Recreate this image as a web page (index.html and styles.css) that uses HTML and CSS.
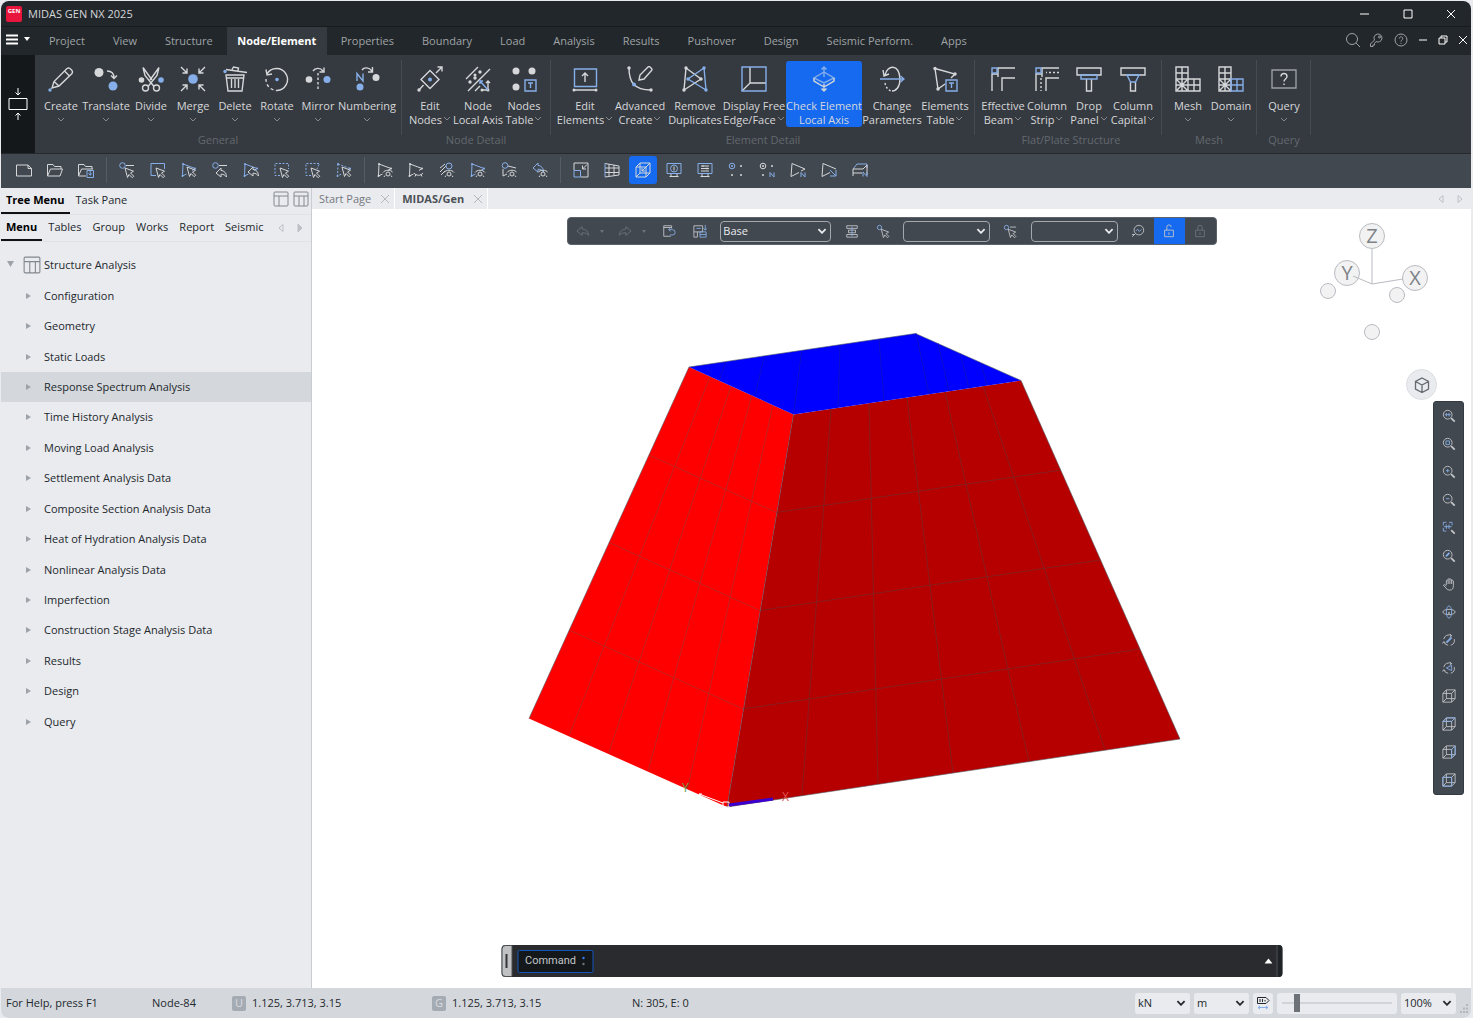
FILE: index.html
```html
<!DOCTYPE html>
<html lang="en">
<head>
    <meta charset="UTF-8">
    <meta name="viewport" content="width=device-width, initial-scale=1.0">
    <title>MIDAS GEN NX 2025</title>
    <link rel="stylesheet" href="styles.css">
</head>
<body>
    <!-- shared icon parts -->
    <svg class="defs" aria-hidden="true">
        <defs>
            <path id="cur" d="M0 0l8.500 3.200-3 1.800 3.200 3.200-1.500 1.500L4 6.500 2.500 9.500z"/>
            <path id="back" d="M0 5l5-5v2.500c3 0 5.500 2.500 5.500 6.500-1.500-2-3-2.800-5.500-2.800V9z"/>
            <g id="eye"><path d="M0 3.500C2 .5 8 .5 10 3.500"/><circle cx="5" cy="5" r="2"/><path d="M2 6.500L1 8M8 6.500L9 8"/></g>
            <path id="chev" d="M1 1l3 3 3-3"/>
            <g id="tri"><path d="M2 2l12 4.500M2 2L1.500 14l4-2M14 6.500l-3 2"/><path class="dots" d="M2 2h.01M14 6.500h.01M1.500 14h.01"/></g>
            <g id="lens"><circle cx="6.500" cy="6.500" r="5"/><path d="M10.500 10.500l4 4" class="thick"/></g>
            <g id="cube"><path d="M1 5h10v10H1zM5 1h10v10H5zM1 5l4-4M11 5l4-4M11 15l4-4M1 15l4-4"/></g>
            <g id="panel"><rect x="1" y="1" width="14" height="14" rx="1"/><path d="M1 5h14M6 5v10"/></g>
        </defs>
    </svg>

    <div class="window">
        <header class="titlebar">
            <span class="logo">GEN</span>
            <h1>MIDAS GEN NX 2025</h1>
            <div class="window-buttons">
                <button aria-label="Minimize"><svg viewBox="0 0 12 12"><path d="M1 6h9"/></svg></button>
                <button aria-label="Maximize"><svg viewBox="0 0 12 12"><path d="M2 2h8v8H2z"/></svg></button>
                <button aria-label="Close"><svg viewBox="0 0 12 12"><path d="M2 2l8 8M10 2l-8 8"/></svg></button>
            </div>
        </header>

        <nav class="menubar">
            <button class="burger" aria-label="Main menu">
                <svg viewBox="0 0 26 12"><path class="bars" d="M1 1.500h12M1 5.500h12M1 9.500h12"/><path class="caret" d="M19 3h6l-3 4z"/></svg>
            </button>
            <div class="menu-tabs">
                <button>Project</button>
                <button>View</button>
                <button>Structure</button>
                <button class="active">Node/Element</button>
                <button>Properties</button>
                <button>Boundary</button>
                <button>Load</button>
                <button>Analysis</button>
                <button>Results</button>
                <button>Pushover</button>
                <button>Design</button>
                <button>Seismic Perform.</button>
                <button>Apps</button>
            </div>
            <div class="menu-tools">
                <button aria-label="Search"><svg viewBox="0 0 16 16"><circle cx="7" cy="7" r="5.500"/><path d="M11 11l4 4"/></svg></button>
                <button aria-label="License"><svg viewBox="0 0 16 16"><path d="M7 9.500a4 4 0 1 0-1.500-1.500L1.500 12v2.500H4V13h1.500v-1.500z"/><circle cx="10.500" cy="5" r="1"/></svg></button>
                <button aria-label="Help"><svg viewBox="0 0 16 16"><circle cx="8" cy="8" r="6"/><path d="M6.300 6.500c0-2.200 3.500-2.200 3.500 0C9.800 8 8 7.800 8 9.500M8 10.800v1"/></svg></button>
                <button class="doc" aria-label="Minimize document"><svg viewBox="0 0 12 12"><path d="M2 6h8"/></svg></button>
                <button class="doc" aria-label="Restore document"><svg viewBox="0 0 12 12"><path d="M2 4h6v6H2zM4 4V2h6v6H8"/></svg></button>
                <button class="doc" aria-label="Close document"><svg viewBox="0 0 12 12"><path d="M2 2l8 8M10 2l-8 8"/></svg></button>
            </div>
        </nav>

        <section class="ribbon">
            <button class="collapse" aria-label="Collapse ribbon">
                <svg viewBox="0 0 22 34"><path d="M2 11.500h18v11H2zM11 1v7M8.500 5.500L11 8l2.500-2.500M11 33v-7M8.500 28.500L11 26l2.500 2.500"/></svg>
            </button>

            <div class="group general">
                <div class="tools">
                    <button><svg class="icon" viewBox="0 0 26 26"><path d="M4 22l2-6.500 13-13q1.500-1 3 0l2 2q1 1.500 0 3L11 20zM16.500 5l5 5M6 15.500l5 4.500"/><circle class="bf" cx="2" cy="24" r="1.700"/></svg><span>Create</span><svg class="chev" viewBox="0 0 8 5"><use href="#chev"/></svg></button>
                    <button><svg class="icon" viewBox="0 0 26 26"><circle class="f" cx="6" cy="6.500" r="4.500"/><circle class="bf" cx="20" cy="20" r="4.500"/><path d="M14 5c5 0 7 3 7 7M18 9.500l3 3 3-3"/></svg><span>Translate</span><svg class="chev" viewBox="0 0 8 5"><use href="#chev"/></svg></button>
                    <button><svg class="icon" viewBox="0 0 26 26"><path d="M5 1.500l2 8 9 11M21 1.500l-2 8-9 11M5 1.500L14 14M21 1.500L12 14"/><circle cx="7.500" cy="22" r="3"/><circle cx="18.500" cy="22" r="3"/><circle class="f" cx="3.500" cy="14" r="2.800"/><circle class="bf" cx="23" cy="14" r="2.800"/></svg><span>Divide</span><svg class="chev" viewBox="0 0 8 5"><use href="#chev"/></svg></button>
                    <button><svg class="icon" viewBox="0 0 26 26"><circle class="bf" cx="13" cy="13" r="4.800"/><path d="M1 1l6 6M7 2.500V7H2.500M25 1l-6 6M19 2.500V7h4.500M1 25l6-6M7 23.500V19H2.500M25 25l-6-6M19 23.500V19h4.500"/></svg><span>Merge</span><svg class="chev" viewBox="0 0 8 5"><use href="#chev"/></svg></button>
                    <button><svg class="icon" viewBox="0 0 26 26"><path d="M4 9h18l-2 16H6zM5 12h16M9.500 13v9M13 13v9M16.500 13v9M4 3.500l21 3M10 3.500L11.500 1l5 1-.5 2.500"/><circle class="bf" cx="3" cy="5.500" r="1.700"/></svg><span>Delete</span><svg class="chev" viewBox="0 0 8 5"><use href="#chev"/></svg></button>
                    <button><svg class="icon" viewBox="0 0 26 26"><path d="M3 8A11 11 0 1 1 13 24.500M2 3.500L3 9l5-1"/><path stroke-dasharray="3 2.500" d="M2 13a11 11 0 0 0 11 11.500"/><circle class="bf" cx="13" cy="13.500" r="1.800"/></svg><span>Rotate</span><svg class="chev" viewBox="0 0 8 5"><use href="#chev"/></svg></button>
                    <button><svg class="icon" viewBox="0 0 26 26"><circle class="f" cx="4" cy="13.500" r="3.300"/><circle class="bf" cx="22" cy="13.500" r="3.500"/><path d="M8 5c2-3 7-4 10 0M14.500 6H19V1.500"/><path stroke-dasharray="2.500 2" d="M13 7v18"/></svg><span>Mirror</span><svg class="chev" viewBox="0 0 8 5"><use href="#chev"/></svg></button>
                    <button><svg class="icon" viewBox="0 0 26 26"><path class="b" d="M3 15V7.500l6 7.500V7.500"/><circle class="bf" cx="6" cy="21" r="3.500"/><circle class="f" cx="22" cy="11.500" r="3.500"/><path d="M8 4c2-3 7-3 10 1M14 6h4.500V1"/></svg><span>Numbering</span><svg class="chev" viewBox="0 0 8 5"><use href="#chev"/></svg></button>
                </div>
                <h2>General</h2>
            </div>

            <div class="group node-detail">
                <div class="tools">
                    <button><svg class="icon" viewBox="0 0 26 26"><path d="M13 4.500l9 9-9 9-9-9zM2 24l4.500-5M19 7l6-6M20.500 1H25v4.500"/><circle class="bf" cx="13" cy="13.500" r="2"/><circle class="f" cx="2" cy="24" r="1.700"/></svg><span>Edit<br>Nodes<svg class="chev" viewBox="0 0 8 5"><use href="#chev"/></svg></span></button>
                    <button><svg class="icon" viewBox="0 0 26 26"><path d="M1 13L13 1M3 25L25 3M10 25l5-5"/><g class="f"><circle cx="10" cy="9" r="1.500"/><circle cx="15" cy="6" r="1.700"/><circle cx="5" cy="16" r="1.700"/><circle cx="10" cy="12" r="1.700"/><circle cx="23" cy="24" r="1.500"/><circle cx="17" cy="24" r="1.500"/></g><path d="M23 24v-9M21 17l2-2 2 2M23 24h-7"/><path class="b" d="M23 24l-8-9M15 18v-3h3"/></svg><span>Node<br>Local Axis</span></button>
                    <button><svg class="icon" viewBox="0 0 26 26"><circle class="f" cx="5" cy="5" r="3.500"/><circle class="f" cx="21" cy="5" r="3.500"/><circle class="f" cx="5" cy="21" r="3.500"/><path class="b" d="M14 14h11v11H14zM17 17h5M19.500 17v5"/></svg><span>Nodes<br>Table<svg class="chev" viewBox="0 0 8 5"><use href="#chev"/></svg></span></button>
                </div>
                <h2>Node Detail</h2>
            </div>

            <div class="group element-detail">
                <div class="tools">
                    <button><svg class="icon" viewBox="0 0 26 26"><path class="b" d="M2.500 3h22v17.500h-22z"/><path d="M13 16V7M10 10l3-3 3 3M2 24h22"/><circle class="f" cx="2" cy="24" r="1.500"/><circle class="f" cx="24" cy="24" r="1.500"/></svg><span>Edit<br>Elements<svg class="chev" viewBox="0 0 8 5"><use href="#chev"/></svg></span></button>
                    <button><svg class="icon" viewBox="0 0 26 26"><path d="M2 2c0 14 5 22 22 22M12 14l1-5 8-8q1-1 2 0l1.500 1.500q1 1 0 2L17 13z"/><circle class="f" cx="2" cy="2" r="1.700"/><circle class="f" cx="24" cy="24" r="1.700"/><circle class="bf" cx="7" cy="18.500" r="1.900"/></svg><span>Advanced<br>Create<svg class="chev" viewBox="0 0 8 5"><use href="#chev"/></svg></span></button>
                    <button><svg class="icon" viewBox="0 0 26 26"><path d="M4 2L2 24l17-11L4 2"/><path class="b" d="M22 2l2 22L6 13 22 2"/><g class="f"><circle cx="4" cy="2" r="1.700"/><circle cx="2" cy="24" r="1.700"/><circle cx="19" cy="13" r="1.700"/></g><g class="bf"><circle cx="22" cy="2" r="1.700"/><circle cx="24" cy="24" r="1.700"/><circle cx="6" cy="13" r="1.700"/></g></svg><span>Remove<br>Duplicates</span></button>
                    <button><svg class="icon" viewBox="0 0 26 26"><path d="M9 1v16h16M9 17l-8 8"/><path class="b" d="M1 1h24v24H1z"/></svg><span>Display Free<br>Edge/Face<svg class="chev" viewBox="0 0 8 5"><use href="#chev"/></svg></span></button>
                    <button class="active"><svg class="icon" viewBox="0 0 26 26"><path class="b" d="M13 6l10 6-10 5-10-5zM13 11V1M10.500 3.500L13 1l2.500 2.500"/><path d="M3 12v3l10 6 10-6v-3M13 18v7M10.500 22.500L13 25l2.500-2.500"/></svg><span>Check Element<br>Local Axis</span></button>
                    <button><svg class="icon" viewBox="0 0 26 26"><path d="M6 9c2-10 14-12 15 4 0 8-4 12-8 12M4 4l1 6 5-2"/><path stroke-dasharray="2 2" d="M6 17c1 5 4 8 7 8"/><path class="b" d="M1 13h24M21.500 10l3.500 3-3.500 3"/></svg><span>Change<br>Parameters</span></button>
                    <button><svg class="icon" viewBox="0 0 26 26"><path d="M3 2.500L6 23l7-5M3 2.500L23 8l-4 4"/><circle class="f" cx="3" cy="2.500" r="1.700"/><circle class="f" cx="23" cy="8" r="1.700"/><circle class="f" cx="6" cy="23" r="1.700"/><path class="b" d="M14 14h11v11H14zM17 17h5M19.500 17v5"/></svg><span>Elements<br>Table<svg class="chev" viewBox="0 0 8 5"><use href="#chev"/></svg></span></button>
                </div>
                <h2>Element Detail</h2>
            </div>

            <div class="group plate">
                <div class="tools">
                    <button><svg class="icon" viewBox="0 0 26 26"><path d="M25 2H8v9M25 12H12v13M2 25V8h6"/><path class="b" d="M2 2h5v5H2z"/></svg><span>Effective<br>Beam<svg class="chev" viewBox="0 0 8 5"><use href="#chev"/></svg></span></button>
                    <button><svg class="icon" viewBox="0 0 26 26"><path d="M25 2H8v9M25 12H12v13M2 25V8h6"/><path stroke-dasharray="2 2" d="M25 6.500H12M7 12v13"/><path class="b" d="M2 2h5v5H2z"/></svg><span>Column<br>Strip<svg class="chev" viewBox="0 0 8 5"><use href="#chev"/></svg></span></button>
                    <button><svg class="icon" viewBox="0 0 26 26"><path d="M1 2h24v7H1zM10.500 13v12h5V13"/><path class="b" d="M5 9h16v4H5z"/></svg><span>Drop<br>Panel<svg class="chev" viewBox="0 0 8 5"><use href="#chev"/></svg></span></button>
                    <button><svg class="icon" viewBox="0 0 26 26"><path d="M1 2h24v7H1zM10.500 16v9h5v-9"/><path class="b" d="M7 9h12l-3.500 7h-5z"/></svg><span>Column<br>Capital<svg class="chev" viewBox="0 0 8 5"><use href="#chev"/></svg></span></button>
                </div>
                <h2>Flat/Plate Structure</h2>
            </div>

            <div class="group mesh">
                <div class="tools">
                    <button><svg class="icon" viewBox="0 0 26 26"><path d="M1 1h12v24H1zM7 1v24M1 7h12M1 13h24v12H13M19 13v12M1 19h24M2 14l10 10M12 14L2 24"/></svg><span>Mesh</span><svg class="chev" viewBox="0 0 8 5"><use href="#chev"/></svg></button>
                    <button><svg class="icon" viewBox="0 0 26 26"><path d="M1 1h12v24H1zM7 1v24M1 7h12M1 13h12M1 19h12M2 14l10 10M12 14L2 24"/><path class="b" d="M13 13h12v12H13zM19 13v12M13 19h12"/></svg><span>Domain</span><svg class="chev" viewBox="0 0 8 5"><use href="#chev"/></svg></button>
                </div>
                <h2>Mesh</h2>
            </div>

            <div class="group query">
                <div class="tools">
                    <button><svg class="icon" viewBox="0 0 26 26"><path class="dim" d="M1 4h24v18H1z"/><path d="M10 10.500c0-4 6-4 6 0 0 2.500-3 2.500-3 5M13 17.500v1.500"/></svg><span>Query</span><svg class="chev" viewBox="0 0 8 5"><use href="#chev"/></svg></button>
                </div>
                <h2>Query</h2>
            </div>
        </section>

        <div class="toolbar">
            <button aria-label="New"><svg viewBox="0 0 16 16"><path d="M.5 3H12l3.500 3.500V14H.5zM12 3v3.500h3.500"/></svg></button>
            <button aria-label="Open"><svg viewBox="0 0 16 16"><path d="M.5 14V2.500H6L7.500 4.500H14V7M.5 14L3.500 7h12L13 14z"/></svg></button>
            <button aria-label="Import"><svg viewBox="0 0 16 16"><path d="M8 14H.5V2.500H6L7.500 4.500H14V7M.5 14L3.500 7H15"/><path class="b" d="M9 8.500h6.500v7H9zM12.200 9v4M10.500 11.500l1.700 1.700 1.700-1.700"/></svg></button>
            <i></i>
            <button aria-label="Select single"><svg viewBox="0 0 16 16"><circle class="b" cx="3.500" cy="3.500" r="2.800"/><path d="M7 3.500h8"/><use href="#cur" x="6" y="6"/></svg></button>
            <button aria-label="Select window"><svg viewBox="0 0 16 16"><path class="b" d="M6 13.500H1V1.500h13.500V7"/><use href="#cur" x="6" y="6"/></svg></button>
            <button aria-label="Select polygon"><svg viewBox="0 0 16 16"><g class="b"><use href="#tri"/></g><use href="#cur" x="6" y="5"/></svg></button>
            <button aria-label="Unselect single"><svg viewBox="0 0 16 16"><circle class="b" cx="3.500" cy="3.500" r="2.800"/><path d="M7 3.500h8"/><use href="#back" x="4" y="6"/></svg></button>
            <button aria-label="Unselect polygon"><svg viewBox="0 0 16 16"><g class="b"><use href="#tri"/></g><use href="#back" x="5" y="5"/></svg></button>
            <button aria-label="Select intersect"><svg viewBox="0 0 16 16"><path class="b" stroke-dasharray="2 1.500" d="M6 13.500H1V1.500h13.500V7"/><use href="#cur" x="6" y="6"/></svg></button>
            <button aria-label="Select line"><svg viewBox="0 0 16 16"><path class="b" stroke-dasharray="2 1.500" d="M6 13.500H1V1.500h13.500L12 7"/><use href="#cur" x="6" y="6"/></svg></button>
            <button aria-label="Select plane"><svg viewBox="0 0 16 16"><g class="b" stroke-dasharray="2 1.500"><use href="#tri"/></g><use href="#cur" x="6" y="5"/></svg></button>
            <i></i>
            <button aria-label="Activate"><svg viewBox="0 0 16 16"><use href="#tri"/><use href="#eye" x="6" y="7"/></svg></button>
            <button aria-label="Inactivate"><svg viewBox="0 0 16 16"><use href="#tri"/><path d="M6 11c2 3 7 3 9 0M8 12.500l-1 2M13 12.500l1 2"/></svg></button>
            <button aria-label="Activate identity"><svg viewBox="0 0 16 16"><path d="M1 6l5-4M1 10l6-6M2 13l4-4"/><circle class="b" cx="10" cy="4" r="3"/><use href="#eye" x="5" y="7"/></svg></button>
            <button aria-label="Activate all"><svg viewBox="0 0 16 16"><g class="b"><use href="#tri"/></g><use href="#eye" x="5" y="7"/></svg></button>
            <button aria-label="Activate previous"><svg viewBox="0 0 16 16"><circle class="b" cx="4" cy="3.500" r="2.800"/><path d="M7 4l8 2M2 7v7l4-2"/><use href="#eye" x="6" y="7"/></svg></button>
            <button aria-label="Activate back"><svg viewBox="0 0 16 16"><g class="b"><use href="#back" x="1" y="1"/></g><use href="#eye" x="6" y="7"/></svg></button>
            <i></i>
            <button aria-label="Shrink"><svg viewBox="0 0 16 16"><path d="M1 8V1h14v14H8M14 2.500L9.500 7M9.500 3.500V7H13"/><path class="b" d="M1 8.500h6.500V15H1z"/></svg></button>
            <button aria-label="Perspective"><svg viewBox="0 0 16 16"><path d="M1 1.500L15 4v9L1 15M5 2v12M10 3v10.500M1 6h14M1 10.500h14"/><path class="b" d="M1 1v14"/></svg></button>
            <button class="active" aria-label="Hidden view"><svg viewBox="0 0 16 16"><use href="#cube"/><path d="M7 9l4-4M7 6v3h3"/></svg></button>
            <button aria-label="Initial view"><svg viewBox="0 0 16 16"><path class="b" d="M1 1.500h14v10H1z"/><circle class="b" cx="8" cy="6.500" r="3.500"/><path d="M8 4.500v4M5 12v2.500M11 12v2.500M3.500 14.500h9"/></svg></button>
            <button aria-label="Display"><svg viewBox="0 0 16 16"><path class="b" d="M1 1.500h14v10H1z"/><path d="M4 4h8M4 6.500h8M4 9h8M6 3v2M10 5.500v2M5 12v2.500M11 12v2.500M3.500 14.500h9"/></svg></button>
            <button aria-label="Nodes"><svg viewBox="0 0 16 16"><circle class="b" cx="4" cy="4" r="2.800"/><path class="b dots" d="M4 4h.01"/><path class="dots" d="M13 4h.01M4 13h.01M13 13h.01"/></svg></button>
            <button aria-label="Node numbers"><svg viewBox="0 0 16 16"><circle cx="4" cy="4" r="2.800"/><path class="dots" d="M4 4h.01M13 4h.01M4 13h.01"/><path class="b" d="M11 15v-4.500l4 4.500v-4.500"/></svg></button>
            <button aria-label="Element numbers"><svg viewBox="0 0 16 16"><path d="M2 1.500L15 7l-4 2M2 1.500L1 14.500l8-4"/><path class="b" d="M11 15v-4.500l4 4.500v-4.500"/></svg></button>
            <button aria-label="Element axes"><svg viewBox="0 0 16 16"><path d="M2 1.500L15 7M2 1.500L1 14.500l8-4"/><path class="b" d="M9 8l6 6M15 8v6H9"/></svg></button>
            <button aria-label="Property names"><svg viewBox="0 0 16 16"><path class="b" d="M1 7l4-5h10v4"/><path d="M1 14V7h10l4-4v10M1 11h9"/><path class="b" d="M11 14.500V10l4 4.500V10"/></svg></button>
        </div>

        <main class="main">
            <aside class="sidebar">
                <div class="pane-tabs">
                    <button class="active">Tree Menu</button>
                    <button>Task Pane</button>
                    <span class="pane-tools">
                        <button aria-label="Two columns"><svg viewBox="0 0 16 16"><use href="#panel"/></svg></button>
                        <button aria-label="Three columns"><svg viewBox="0 0 16 16"><use href="#panel"/><path d="M11 5v10"/></svg></button>
                    </span>
                </div>
                <div class="pane-tabs">
                    <button class="active">Menu</button>
                    <button>Tables</button>
                    <button>Group</button>
                    <button>Works</button>
                    <button>Report</button>
                    <button>Seismic</button>
                    <span class="arrows">
                        <button aria-label="Previous"><svg viewBox="0 0 6 10"><path d="M5 1.500v7L1 5z"/></svg></button>
                        <button aria-label="Next"><svg viewBox="0 0 6 10"><path class="fill" d="M1 1v8l4-4z"/></svg></button>
                    </span>
                </div>
                <ul class="tree">
                    <li class="root"><svg class="open" viewBox="0 0 8 8"><path d="M1 0h7L4.500 6z"/></svg><svg class="panel" viewBox="0 0 16 16"><use href="#panel"/><path d="M11 5v10"/></svg>Structure Analysis</li>
                    <li><svg viewBox="0 0 8 8"><path d="M1 1v6l5-3z"/></svg>Configuration</li>
                    <li><svg viewBox="0 0 8 8"><path d="M1 1v6l5-3z"/></svg>Geometry</li>
                    <li><svg viewBox="0 0 8 8"><path d="M1 1v6l5-3z"/></svg>Static Loads</li>
                    <li class="selected"><svg viewBox="0 0 8 8"><path d="M1 1v6l5-3z"/></svg>Response Spectrum Analysis</li>
                    <li><svg viewBox="0 0 8 8"><path d="M1 1v6l5-3z"/></svg>Time History Analysis</li>
                    <li><svg viewBox="0 0 8 8"><path d="M1 1v6l5-3z"/></svg>Moving Load Analysis</li>
                    <li><svg viewBox="0 0 8 8"><path d="M1 1v6l5-3z"/></svg>Settlement Analysis Data</li>
                    <li><svg viewBox="0 0 8 8"><path d="M1 1v6l5-3z"/></svg>Composite Section Analysis Data</li>
                    <li><svg viewBox="0 0 8 8"><path d="M1 1v6l5-3z"/></svg>Heat of Hydration Analysis Data</li>
                    <li><svg viewBox="0 0 8 8"><path d="M1 1v6l5-3z"/></svg>Nonlinear Analysis Data</li>
                    <li><svg viewBox="0 0 8 8"><path d="M1 1v6l5-3z"/></svg>Imperfection</li>
                    <li><svg viewBox="0 0 8 8"><path d="M1 1v6l5-3z"/></svg>Construction Stage Analysis Data</li>
                    <li><svg viewBox="0 0 8 8"><path d="M1 1v6l5-3z"/></svg>Results</li>
                    <li><svg viewBox="0 0 8 8"><path d="M1 1v6l5-3z"/></svg>Design</li>
                    <li><svg viewBox="0 0 8 8"><path d="M1 1v6l5-3z"/></svg>Query</li>
                </ul>
            </aside>

            <section class="workspace">
                <div class="doc-tabs">
                    <div class="doc-tab"><button>Start Page</button><button class="close" aria-label="Close Start Page"><svg viewBox="0 0 8 8"><path d="M0 0l8 8M8 0L0 8"/></svg></button></div>
                    <div class="doc-tab active"><button>MIDAS/Gen</button><button class="close" aria-label="Close MIDAS/Gen"><svg viewBox="0 0 8 8"><path d="M0 0l8 8M8 0L0 8"/></svg></button></div>
                    <span class="arrows">
                        <button aria-label="Previous tab"><svg viewBox="0 0 6 10"><path d="M5 1.500v7L1 5z"/></svg></button>
                        <button aria-label="Next tab"><svg viewBox="0 0 6 10"><path d="M1 1.500v7L5 5z"/></svg></button>
                    </span>
                </div>

                <div class="canvas">
                    <svg class="model" viewBox="520 325 670 490">
                        <path class="face-left" d="M689 367l104.500 47.500L727 807 529 718.500z"/>
                        <path class="face-front" d="M793.500 414.500L1021 380.500 1180 739 727 807z"/>
                        <path class="face-top" d="M689 367l226.500-33.500L1021 380.500l-227.500 34z"/>
                        <path class="mesh-left" d="M710 376.500L569 736M731 386L608.500 753.500M752 395L648 771M773 405l-85.500 384M649 455l127.500 57.500M609 542.500l151 68M569 630l174 79"/>
                        <path class="mesh-front" d="M831 409l-29 387M869 403l9 381M907 398l46 375M945 392l84 370M983 386l122 364M776.500 512.500L1061 470M760 610.500l340.500-50.500M743 709l397-60"/>
                        <path class="mesh-top" d="M725.500 362l-6 18M764 357l-9 39M801.500 352l-8 62M840 345l-2 62M879 339l5 62M916 333l13 61M938 343l11 48M960 353l9 35M981 363l6 22"/>
                        <path class="edges" d="M689 367L529 718.500M793.500 414.500L727 807M1021 380.500L1180 739 727 807M689 367l226.500-33.500L1021 380.500"/>
                        <path class="axis-white" d="M699 794l24 9M702 794h-3l2 3M723 802h6v5h-6z"/>
                        <path class="axis-blue" d="M729 805l44-6"/>
                        <text class="y-label" x="682" y="792">Y</text>
                        <text class="x-label" x="782" y="801">X</text>
                    </svg>

                    <div class="view-bar">
                        <button class="off" aria-label="Undo"><svg viewBox="0 0 16 16"><path d="M1 8l6-5v3c5 0 7 3 7.500 7C13 11 11 10 7 10v3z"/></svg></button>
                        <button class="off drop" aria-label="Undo list"><svg viewBox="0 0 8 8"><path class="f" d="M2 3h4L4 6z"/></svg></button>
                        <button class="off" aria-label="Redo"><svg viewBox="0 0 16 16"><path d="M15 8L9 3v3C4 6 2 9 1.500 13 3 11 5 10 9 10v3z"/></svg></button>
                        <button class="off drop" aria-label="Redo list"><svg viewBox="0 0 8 8"><path class="f" d="M2 3h4L4 6z"/></svg></button>
                        <button class="wide" aria-label="Stage"><svg viewBox="0 0 16 16"><path d="M11 5V2H2v12h8M2 4h9"/><path class="b" d="M8 6.500h4a3 3 0 0 1 0 6H9M9.500 4.500l-2 2 2 2"/></svg></button>
                        <button class="wide" aria-label="Stage define"><svg viewBox="0 0 16 16"><path d="M1 15V2h10v7H1M5 9v6H1"/><path class="b" d="M4 5h5M8 9h7v6H8zM8 12h7M14 1v6M12 5l2 2 2-2"/></svg></button>
                        <span class="select stage"><select aria-label="Construction stage"><option>Base</option></select><svg viewBox="0 0 8 5"><use href="#chev"/></svg></span>
                        <button class="wide" aria-label="Named plane"><svg viewBox="0 0 16 16"><path d="M2 2h12v3H2zM4 7h8v3H4zM2 12h12v3H2z"/><path class="b" d="M8 3v11"/></svg></button>
                        <button class="wide" aria-label="Select node"><svg viewBox="0 0 16 16"><circle class="b" cx="4" cy="4" r="2.500"/><use href="#cur" x="6" y="6"/></svg></button>
                        <span class="select"><select aria-label="Node"></select><svg viewBox="0 0 8 5"><use href="#chev"/></svg></span>
                        <button class="wide" aria-label="Select element"><svg viewBox="0 0 16 16"><circle class="b" cx="4" cy="4" r="2.500"/><path d="M8 3.500h7"/><use href="#cur" x="6" y="6"/></svg></button>
                        <span class="select"><select aria-label="Element"></select><svg viewBox="0 0 8 5"><use href="#chev"/></svg></span>
                        <button class="wide" aria-label="Query view"><svg viewBox="0 0 16 16"><circle cx="9" cy="7" r="5.500"/><path d="M5 11l-3.500 3.500M1 12h3"/><path class="b" d="M5.500 8L7.500 6l2 2.500L12 6"/></svg></button>
                        <button class="wide active" aria-label="Unlock"><svg viewBox="0 0 16 16"><path d="M3 7h10v7.500H3zM5.500 7V3.500a2.500 2.500 0 0 1 5 0M8 9.500v3"/></svg></button>
                        <button class="wide off" aria-label="Lock"><svg viewBox="0 0 16 16"><path d="M3 7h10v7.500H3zM5.500 7V4a2.500 2.500 0 0 1 5 0v3M8 9.500v3"/></svg></button>
                    </div>

                    <svg class="gizmo" viewBox="0 0 110 120">
                        <circle cx="52" cy="14" r="12.500"/><circle cx="27" cy="51" r="12.500"/><circle cx="95" cy="56" r="12.500"/>
                        <circle cx="8" cy="69" r="7.500"/><circle cx="77" cy="73" r="7.500"/><circle cx="52" cy="110" r="7.500"/>
                        <path d="M52 27v35M33 54l19 8 31-5"/>
                        <text x="52" y="21">Z</text><text x="27" y="58">Y</text><text x="95" y="63">X</text>
                    </svg>
                    <button class="home-cube" aria-label="View cube"><svg viewBox="0 0 16 16"><path d="M8 1l6.500 3.500v7.500L8 15.500 1.500 12V4.500zM1.500 4.500L8 8l6.500-3.500M8 8v7.500"/></svg></button>

                    <div class="nav-bar">
                        <button aria-label="Zoom fit"><svg viewBox="0 0 16 16"><use href="#lens"/><path class="b" d="M3 6.500h7M5 4.500v4M8 4.500v4"/></svg></button>
                        <button aria-label="Zoom window"><svg viewBox="0 0 16 16"><use href="#lens"/><path class="b" d="M4.500 4.500h4v4h-4z"/></svg></button>
                        <button aria-label="Zoom in"><svg viewBox="0 0 16 16"><use href="#lens"/><path class="b" d="M4.500 6.500h4M6.500 4.500v4"/></svg></button>
                        <button aria-label="Zoom out"><svg viewBox="0 0 16 16"><use href="#lens"/><path class="b" d="M4.500 6.500h4"/></svg></button>
                        <button aria-label="Auto fit"><svg viewBox="0 0 16 16"><g class="b"><path d="M1.500 5V1.500H5M8 1.500h3.500V5M1.500 8v3.500H5M2 6.500h9M5 4v5M8 4v5"/></g><path class="thick" d="M10.500 10.500l4 4"/></svg></button>
                        <button aria-label="Dynamic zoom"><svg viewBox="0 0 16 16"><use href="#lens"/><path class="b thick" d="M4.500 8.500l4-4"/></svg></button>
                        <button aria-label="Pan"><svg viewBox="0 0 16 16"><path d="M5 9V4q1-1.500 2 0V2.500q1-1.500 2 0V3q1-1.500 2 0v1.500q1-1.500 2 0V10q0 5-4 5-3.500 0-4.500-2.500L1.500 9.500q.5-2 3.500.5M7 4v4M9 3v5M11 4v4"/></svg></button>
                        <button aria-label="Orbit"><svg viewBox="0 0 16 16"><ellipse cx="8" cy="8" rx="7" ry="3"/><ellipse class="b" cx="8" cy="8" rx="3" ry="7"/><circle class="f" cx="8" cy="9" r="1"/></svg></button>
                        <button aria-label="Rotate view"><svg viewBox="0 0 16 16"><path d="M2 7a6 6 0 0 1 9-4M9 1l2 2-2 2M14 7a6 6 0 0 1-4 7M7 14a6 6 0 0 1-5-4M.5 12L2 10l2 1.500"/><path class="b thick" d="M5 11l6-6"/></svg></button>
                        <button aria-label="Rotate left"><svg viewBox="0 0 16 16"><path d="M2 7a6 6 0 0 1 9-4M9 1l2 2-2 2M14 7a6 6 0 0 1-4 7M7 14a6 6 0 0 1-5-4M.5 12L2 10l2 1.500"/><path class="b" d="M11 5v6L5 8z"/></svg></button>
                        <button aria-label="Iso view"><svg viewBox="0 0 16 16"><use href="#cube"/></svg></button>
                        <button aria-label="Top view"><svg viewBox="0 0 16 16"><use href="#cube"/><path class="b" d="M1 5l4-4h10l-4 4z"/></svg></button>
                        <button aria-label="Right view"><svg viewBox="0 0 16 16"><use href="#cube"/><path class="b" d="M11 5l4-4v10l-4 4z"/></svg></button>
                        <button aria-label="Front view"><svg viewBox="0 0 16 16"><use href="#cube"/><path class="b" d="M1 5h10v10H1z"/></svg></button>
                    </div>

                    <div class="command">
                        <span class="grip"></span>
                        <label class="command-label" for="command-input">Command <svg viewBox="0 0 4 10"><circle class="on" cx="2" cy="2" r="1.200"/><circle cx="2" cy="8" r="1.200"/></svg></label>
                        <input id="command-input" type="text">
                        <button aria-label="Expand"><svg viewBox="0 0 8 6"><path d="M0 5.500h8L4 .5z"/></svg></button>
                        <span class="grip-end"></span>
                    </div>
                </div>
            </section>
        </main>

        <footer class="status">
            <span class="help">For Help, press F1</span>
            <span class="node">Node-84</span>
            <span class="coord"><b>U</b>1.125, 3.713, 3.15</span>
            <span class="coord"><b>G</b>1.125, 3.713, 3.15</span>
            <span>N: 305, E: 0</span>
            <div class="units">
                <span class="select"><select aria-label="Force unit"><option>kN</option></select><svg viewBox="0 0 8 5"><use href="#chev"/></svg></span>
                <span class="select"><select aria-label="Length unit"><option>m</option></select><svg viewBox="0 0 8 5"><use href="#chev"/></svg></span>
                <button aria-label="Unit converter"><svg viewBox="0 0 14 14"><path d="M1.500 1.500H10l3 3-3 3H1.500zM4 3v3M6.500 3v3M9 4v1.500"/><path class="b" d="M2 11.500h10M4 10l-2 1.500L4 13M10 10l2 1.500-2 1.500"/></svg></button>
                <span class="slider"><input type="range" min="0" max="100" value="12" aria-label="Zoom"></span>
                <span class="select zoom"><select aria-label="Zoom level"><option>100%</option></select><svg viewBox="0 0 8 5"><use href="#chev"/></svg></span>
            </div>
            <svg class="resize" viewBox="0 0 10 10"><path d="M7 0h2v2H7zM4 3.500h2v2H4zM7 3.500h2v2H7zM1 7h2v2H1zM4 7h2v2H4zM7 7h2v2H7z"/></svg>
        </footer>
    </div>
</body>
</html>
```
FILE: styles.css
```css
* { box-sizing: border-box; }
body { margin: 0; background: #e9ebef; font-family: "Open Sans", "Noto Sans", sans-serif; font-size: 11px; line-height: 14px; color: #23282c; }
button, select, input { font: inherit; color: inherit; margin: 0; padding: 0; border: 0; background: none; }
button { display: flex; align-items: center; justify-content: center; white-space: nowrap; cursor: pointer; }
svg { display: block; fill: none; stroke: currentColor; flex: none; }
h1, h2 { margin: 0; font-size: 11px; font-weight: 400; }
.defs { position: absolute; width: 0; height: 0; }
.b { stroke: #86aee8; }
.f { fill: currentColor; stroke: none; }
.bf { fill: #86aee8; stroke: none; }
.dim { stroke: #9a9ea3; }
.fill { fill: currentColor; }
.thick { stroke-width: 2; }
.dots { stroke-width: 2; stroke-linecap: round; }

.window { display: flex; flex-direction: column; height: 100vh; min-height: 800px; padding: 1px 2px 0 1px; border-radius: 8px; overflow: hidden; }

/* title */
.titlebar { display: flex; align-items: center; height: 26px; padding: 0 5px; background: #22272b; color: #d5d7d9; border-bottom: 1px solid #181c1f; border-radius: 8px 8px 0 0; }
.logo { width: 16px; height: 16px; margin-right: 6px; border-radius: 2px; background: #e8163c; color: #fff; font: 700 6px/11px "Open Sans", sans-serif; text-align: center; }
.window-buttons { display: flex; gap: 31px; margin-left: auto; margin-right: 9px; color: #fff; }
.window-buttons svg { width: 12px; height: 12px; }

/* menu */
.menubar { display: flex; height: 28px; background: #22272b; color: #9fa3a6; }
.burger { width: 34px; color: #fff; padding-bottom: 2px; }
.burger svg { width: 26px; height: 12px; }
.bars { stroke-width: 2; }
.caret { fill: currentColor; stroke: none; }
.menu-tabs { display: flex; }
.menu-tabs button { padding: 0 14px; }
.menu-tabs .active { width: 100px; padding: 0; background: #353a40; color: #fff; font-weight: 700; }
.menu-tools { display: flex; align-items: center; gap: 8px; margin-left: auto; margin-right: 2px; padding-bottom: 2px; }
.menu-tools svg { width: 16px; height: 16px; }
.menu-tools .doc { color: #fff; }
.menu-tools .doc svg { width: 12px; height: 12px; }

/* ribbon */
.ribbon { display: flex; height: 99px; background: #353a40; color: #d5d7d9; border-bottom: 1px solid #25292d; }
.collapse { width: 34px; background: #14181b; color: #fff; }
.collapse svg { width: 22px; height: 34px; }
.group { position: relative; padding: 6px 6px 0; }
.group::after { content: ""; position: absolute; right: 0; top: 5px; bottom: 18px; width: 1px; background: #464b51; }
.tools { display: grid; height: 65px; }
.general .tools { grid-template-columns: 42px 48px 42px 42px 42px 42px 40px 58px; }
.node-detail .tools { grid-template-columns: 46px 50px 42px; }
.element-detail .tools { grid-template-columns: 54px 56px 54px 64px 76px 60px 46px; }
.plate .tools { grid-template-columns: 40px 48px 36px 52px; }
.mesh .tools { grid-template-columns: 44px 42px; }
.query .tools { grid-template-columns: 40px; }
.general { padding-left: 5px; }
.node-detail { padding-left: 5px; }
.element-detail, .query { padding-left: 7px; padding-right: 7px; }
.plate { padding-left: 8px; padding-right: 3px; }
.mesh { padding-left: 4px; padding-right: 5px; }
.tools button { flex-direction: column; justify-content: flex-start; padding-top: 5px; border-radius: 3px; }
.tools .active, .toolbar .active, .view-bar .active { background: #156af0; }
.icon { width: 26px; height: 26px; margin-bottom: 7px; stroke-width: 1.4px; }
.chev { width: 8px; height: 5px; margin-top: 4px; color: #85898e; }
.tools span .chev { display: inline-block; margin: 0 0 3px 1px; }
.group h2 { margin-top: 7px; text-align: center; color: #63686e; }

/* quick tools */
.toolbar { display: flex; align-items: center; gap: 3px; height: 34px; padding: 0 0 2px 9px; background: #424850; color: #d5d7d9; }
.toolbar button { width: 28px; height: 28px; border-radius: 3px; }
.toolbar svg { width: 16px; height: 16px; }
.toolbar i { width: 1px; height: 26px; margin: 0 3px; background: #565c63; }

.main { display: flex; flex: 1; min-height: 0; }

/* tree pane */
.sidebar { width: 311px; background: #e9ebef; border-right: 1px solid #c9cdd2; }
.pane-tabs { display: flex; height: 27px; border-bottom: 1px solid #e0e2e6; }
.pane-tabs > button { padding: 0 5px; margin-right: 1px; border-bottom: 2px solid transparent; }
.pane-tabs > .active { border-color: #111; color: #000; font-weight: 700; }
.pane-tools { display: flex; gap: 4px; margin-left: auto; padding: 0 2px 4px 0; color: #84898f; }
.pane-tools svg { width: 16px; height: 16px; }
.arrows { display: flex; align-items: center; gap: 13px; margin-left: auto; margin-right: 8px; color: #bcc0c4; }
.arrows svg { width: 6px; height: 10px; }
.tree { display: grid; grid-auto-rows: 1fr; height: 487px; margin: 8px 0 0; padding: 0; list-style: none; }
.tree li { display: flex; align-items: center; gap: 11px; padding-left: 24px; }
.tree li svg { width: 8px; height: 8px; fill: #9ea3a9; stroke: none; }
.tree .root { gap: 3px; padding-left: 5px; }
.tree .root .panel { width: 18px; height: 18px; margin-left: 6px; fill: none; stroke: #84898f; }
.tree .selected { background: #d4d8dc; }

/* document */
.workspace { display: flex; flex-direction: column; flex: 1; min-width: 0; }
.doc-tabs { display: flex; height: 21px; background: #e9ebef; color: #75797e; }
.doc-tab { display: flex; align-items: center; gap: 10px; padding: 1px 5px 0 7px; border-right: 1px solid #fff; }
.doc-tab.active { color: #4c5156; font-weight: 700; }
.close svg { width: 8px; height: 8px; stroke: #b4b8bc; }
.canvas { position: relative; flex: 1; background: #fff; overflow: hidden; }
.model { position: absolute; left: 208px; top: 116px; width: 670px; height: 490px; stroke: none; }
.face-left { fill: #f00; }
.face-front { fill: #b60000; }
.face-top { fill: #00f; }
.mesh-left { stroke: #a83030; stroke-width: .7px; }
.mesh-front { stroke: #7d2525; stroke-width: .8px; }
.mesh-top { stroke: #1414b4; stroke-width: .7px; }
.edges { stroke: #4d5560; stroke-width: .6px; }
.axis-white { stroke: #fff; }
.axis-blue { stroke: #3a00d0; stroke-width: 3px; }
.model text { font-size: 12px; }
.y-label { fill: #5aa050; }
.x-label { fill: #e05050; }

.view-bar { position: absolute; top: 8px; left: 50%; transform: translateX(-50%); display: flex; align-items: center; height: 28px; width: 650px; padding-left: 7px; border: 1px solid #5c626a; border-radius: 4px; background: #424850; color: #c3c6c9; }
.view-bar svg { width: 14px; height: 14px; }
.view-bar button { width: 18px; height: 26px; }
.view-bar .off { color: #6d737a; }
.view-bar .drop { width: 19px; }
.view-bar .drop + .off { margin-left: 5px; }
.view-bar .drop svg { width: 8px; height: 8px; }
.view-bar .wide { width: 31px; }
.select { position: relative; display: block; }
.select select { width: 100%; height: 100%; appearance: none; }
.select svg, .view-bar .select svg { position: absolute; right: 4px; top: 50%; width: 10px; height: 6px; margin-top: -3px; stroke-width: 1.5px; pointer-events: none; }
.view-bar .select { width: 87px; height: 21px; margin: 0 5px; color: #e9ebef; }
.view-bar .select select { padding-left: 2px; border: 1px solid #a4a8ad; border-radius: 4px; }
.view-bar .stage { width: 111px; }

.gizmo { position: absolute; right: 41px; top: 13px; width: 110px; height: 120px; fill: #f2f2f3; stroke: #b9bbc0; }
.gizmo path { fill: none; }
.gizmo text { fill: #7d8287; stroke: none; font-size: 20px; text-anchor: middle; }
.home-cube { position: absolute; right: 34px; top: 160px; width: 31px; height: 31px; border: 1px solid #dcdee2; border-radius: 50%; background: #e9ebef; color: #666b71; }
.home-cube svg { width: 16px; height: 16px; stroke-width: 1.3px; }
.nav-bar { position: absolute; right: 7px; top: 192px; width: 31px; border: 1px solid #343a41; border-radius: 3px; background: #424850; color: #c3c6c9; }
.nav-bar button { width: 100%; height: 28px; }
.nav-bar svg { width: 14px; height: 14px; }

.command { position: absolute; bottom: 11px; left: 50%; transform: translateX(-50%); display: flex; align-items: center; width: 781px; height: 32px; border-radius: 4px; background: #292b2f; color: #fff; overflow: hidden; }
.grip { display: flex; align-items: center; justify-content: center; width: 11px; height: 100%; border: 1px solid #4a4d50; border-radius: 4px 0 0 4px; background: #bfc1c3; }
.grip::before { content: ""; width: 2px; height: 14px; background: #33363a; }
.command-label { display: flex; align-items: center; gap: 5px; height: 23px; margin-left: 5px; padding: 0 7px; border: 1px solid #1556bd; border-radius: 2px; background: #14181b; color: #c3c6c9; font-family: Roboto, sans-serif; }
.command-label svg { width: 4px; height: 10px; fill: #6d737a; stroke: none; }
.command-label .on { fill: #2f7df5; }
.command input { flex: 1; height: 23px; outline: 0; }
.command button svg { width: 8px; height: 6px; fill: #fff; stroke: none; }
.grip-end { width: 6px; height: 100%; margin-left: 4px; border-left: 1px solid #50555a; background: #1f2326; }

/* status */
.status { position: relative; display: flex; align-items: center; height: 30px; padding: 0 15px 0 5px; background: #d4d8dd; border-radius: 0 0 8px 8px; }
.help { width: 146px; }
.node { width: 80px; }
.coord { display: flex; align-items: center; gap: 6px; width: 200px; }
.coord b { width: 14px; height: 15px; border-radius: 2px; background: #a5abb3; color: #d9dce0; font-weight: 400; text-align: center; }
.units { display: flex; gap: 4px; margin-left: auto; }
.units .select, .units button, .slider { height: 21px; border-radius: 3px; background: #e9ebef; }
.units .select { width: 55px; }
.units .select select { padding-left: 3px; }
.units button { width: 20px; }
.units button svg { width: 14px; height: 14px; }
.slider { width: 120px; padding: 0 5px; }
.slider input { width: 100%; height: 21px; appearance: none; }
.slider input::-webkit-slider-runnable-track { height: 2px; background: #d0d4d8; }
.slider input::-webkit-slider-thumb { appearance: none; width: 6px; height: 18px; margin-top: -8px; background: #6c7278; }
.resize { position: absolute; right: 2px; bottom: 4px; width: 10px; height: 10px; fill: #b2b7bd; stroke: none; }
```
